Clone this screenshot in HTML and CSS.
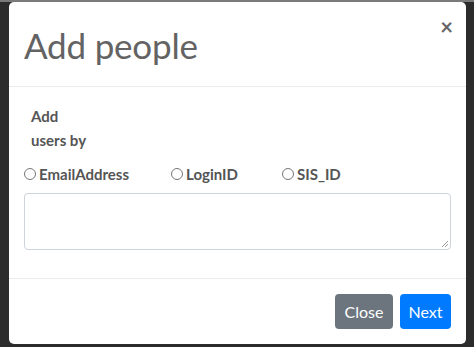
FILE: index.html
```html
<!DOCTYPE html>
<html>
<head>
<meta charset="utf-8">
<link rel="stylesheet" href="styles.css">
</head>
<body>
<div class="backdrop">
  <div class="modal">
    <div class="modal-header">
      <h1 class="title">Add people</h1>
      <span class="close">×</span>
    </div>
    <div class="modal-body">
      <div class="label">Add<br>users by</div>
      <div class="radios">
        <label class="radio r1"><span class="dot"></span>EmailAddress</label>
        <label class="radio r2"><span class="dot"></span>LoginID</label>
        <label class="radio r3"><span class="dot"></span>SIS_ID</label>
      </div>
      <div class="textarea"><svg class="grip" width="8" height="8" viewBox="0 0 8 8"><path d="M7 1L1 7M7 4L4 7" stroke="#999" stroke-width="1"/></svg></div>
    </div>
    <div class="modal-footer">
      <button class="btn btn-close">Close</button>
      <button class="btn btn-next">Next</button>
    </div>
  </div>
</div>
</body>
</html>
```
FILE: styles.css
```css
html, body { margin: 0; padding: 0; }
body { width: 474px; height: 347px; background: #2c2c2c; overflow: hidden; font-family: "Source Sans Pro", Lato, "Open Sans", sans-serif; }
.backdrop { padding: 2px 8px 3px 9px; background: linear-gradient(#7a7a7a 0, #7a7a7a 2px, #2c2c2c 2px); height: 342px; }
.modal { width: 457px; height: 342px; background: #fff; border-radius: 5px; display: flex; flex-direction: column; box-sizing: border-box; }
.modal-header { display: flex; justify-content: space-between; align-items: flex-start; padding: 20px 16px 0 15px; height: 85px; border-bottom: 1px solid #e9ecef; box-sizing: border-box; flex: none; }
.title { margin: 0; font-weight: 400; font-size: 35px; line-height: 46px; color: #636363; letter-spacing: -0.2px; }
.close { font-size: 22px; font-weight: 700; color: #666; line-height: 20px; margin-top: -5px; margin-right: -3px; }
.modal-body { padding: 17px 15px 0 15px; height: 192px; box-sizing: border-box; border-bottom: 1px solid #e9ecef; flex: none; }
.label { font-weight: 700; font-size: 15px; line-height: 24px; color: #555; padding-left: 7px; }
.radios { display: flex; margin-top: 12px; height: 20px; align-items: center; }
.radio { display: flex; align-items: center; font-weight: 700; font-size: 15px; color: #555; }
.r1 { width: 147px; }
.r2 { width: 111px; }
.dot { width: 12px; height: 12px; border: 1px solid #777; border-radius: 50%; margin-right: 3px; box-sizing: border-box; }
.textarea { margin-top: 9px; height: 55px; border: 1px solid #ced4da; border-radius: 4px; position: relative; }
.grip { position: absolute; right: 1px; bottom: 1px; }
.modal-footer { display: flex; justify-content: flex-end; padding: 15px 15px 0; gap: 7px; }
.btn { border: 0; border-radius: 4px; height: 35px; color: #fff; font-family: inherit; font-size: 16px; padding: 0; }
.btn-close { background: #6c757d; width: 58px; }
.btn-next { background: #007bff; width: 51px; }
```
